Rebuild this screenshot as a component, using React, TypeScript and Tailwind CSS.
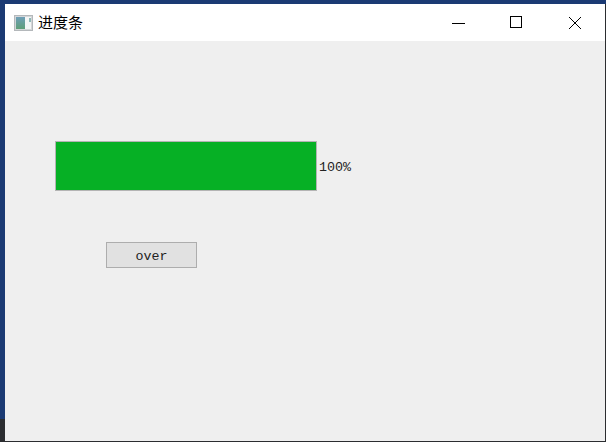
export default function App() {
  return (
    <div className="w-[606px] h-[442px] flex flex-col bg-[#1b3a73] overflow-hidden">
      <div className="h-[4px] shrink-0 bg-[#1b3a73]" />
      <div className="flex-1 flex min-h-0">
        <div className="w-[5px] shrink-0 flex flex-col">
          <div className="flex-1 bg-[#1b3a73]" />
          <div className="h-[23px] bg-[#2b2d30]" />
        </div>
        <div className="flex-1 flex flex-col min-w-0">
          <div className="h-[37px] shrink-0 bg-white flex items-center">
            <svg width="19" height="16" viewBox="0 0 19 16" className="ml-[9px]">
              <defs>
                <linearGradient id="g" x1="0" y1="0" x2="0" y2="1">
                  <stop offset="0" stopColor="#6f9fb8" />
                  <stop offset="1" stopColor="#5f9f78" />
                </linearGradient>
              </defs>
              <rect x="0.5" y="0.5" width="18" height="15" fill="#f4f6f6" stroke="#b4b8bb" />
              <rect x="1.5" y="1.5" width="16" height="13" fill="none" stroke="#d4d6d8" />
              <rect x="2" y="2" width="9" height="12" fill="url(#g)" />
              <rect x="15" y="3" width="2" height="4" fill="#8fb8b8" />
            </svg>
            <span className="ml-[5px] text-[15px] text-black font-['Noto_Sans_CJK_SC',sans-serif]">进度条</span>
            <div className="ml-auto flex items-center">
              <svg width="14" height="14" viewBox="0 0 14 14" className="mr-[44px]">
                <path d="M0 7.5H13" stroke="#000" strokeWidth="1" />
              </svg>
              <svg width="13" height="13" viewBox="0 0 13 13" className="mr-[45px]">
                <rect x="0.5" y="0.5" width="11" height="11" fill="none" stroke="#000" />
              </svg>
              <svg width="14" height="14" viewBox="0 0 14 14" className="mr-[23px]">
                <path d="M1 1L13 13M13 1L1 13" stroke="#000" strokeWidth="1" />
              </svg>
            </div>
          </div>
          <div className="flex-1 bg-[#efefef] pl-[50px] pt-[100px] font-['Liberation_Mono',monospace] text-[13.33px] text-[#222222]">
            <div className="flex items-center">
              <div className="w-[262px] h-[50px] bg-[#06b025] border border-[#b4b4b4]" />
              <span className="ml-[2px] mt-[3px]">100%</span>
            </div>
            <div className="ml-[51px] mt-[51px] w-[91px] h-[26px] bg-[#e1e1e1] border border-[#adadad] flex items-center justify-center pt-[3px]">
              over
            </div>
          </div>
          <div className="h-[1px] shrink-0 bg-[#2b2d30]" />
        </div>
        <div className="w-[1px] shrink-0 bg-[#2b2d30]" />
      </div>
    </div>
  );
}
